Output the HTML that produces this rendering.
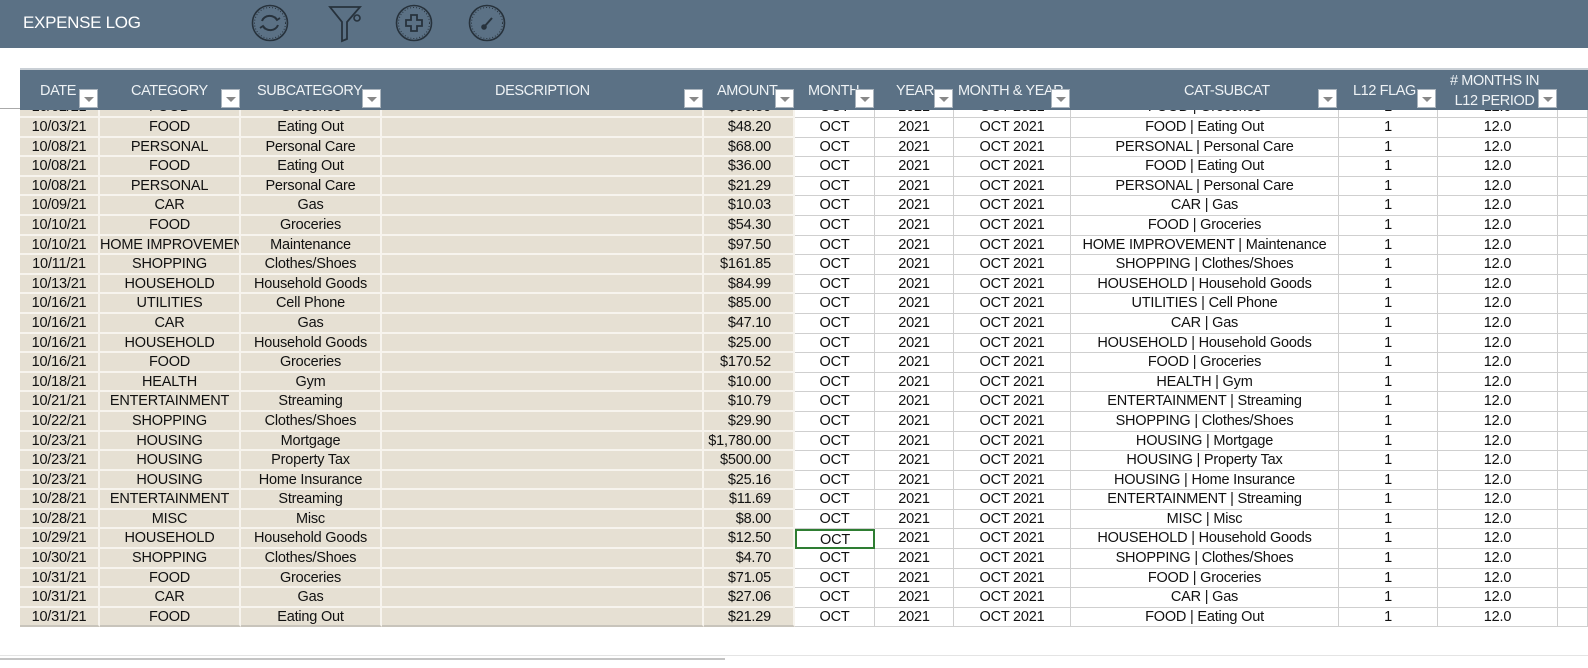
<!DOCTYPE html>
<html><head><meta charset="utf-8">
<style>
*{margin:0;padding:0;box-sizing:border-box}
html{width:1588px;height:668px;overflow:hidden}
body{width:1588px;height:668px;overflow:hidden;background:#fff;font-family:"Liberation Sans",Arial,sans-serif;position:relative}
#top{position:absolute;left:0;top:0;width:1588px;height:48px;background:#5b7185;overflow:hidden}
#title{position:absolute;left:23px;top:13px;color:#fff;font-size:17px;letter-spacing:-0.3px}
#hdr{position:absolute;left:20px;top:68px;width:1568px;height:42px;background:#5b7185;border-top:2px solid #c9cfd5;z-index:2;overflow:hidden}
.h{position:absolute;color:#eef2f5;font-size:14.5px;white-space:nowrap;text-align:center;letter-spacing:-0.4px}
.dd{position:absolute;top:19px;width:19px;height:19px;background:#fff;border:1px solid #aab4bd}
.dd:after{content:"";position:absolute;left:4px;top:7px;border-left:5px solid transparent;border-right:5px solid transparent;border-top:5px solid #888}
#body{position:absolute;left:20px;top:110px;width:1568px;height:519px;overflow:hidden}
#rows{position:absolute;left:0;top:-11.6px;width:1568px}
.r{display:flex;height:19.6px;width:1568px}
.r div{flex:none;height:19.6px;line-height:19px;font-size:14.5px;color:#111;text-align:center;white-space:nowrap;overflow:hidden;letter-spacing:-0.2px}
.b{background:#e6e0d3;border-right:2px solid #f7f4ee;border-bottom:2px solid #f7f4ee}
.w{background:#fff;border-right:1px solid #cfcfcf;border-bottom:1px solid #cfcfcf}
.c1{width:80px}.c2{width:141px}.c3{width:141px}.c4{width:322px}.c5{width:91px;text-align:right!important;padding-right:22px}.c6{width:80px}.c7{width:79px}.c8{width:117px}.c9{width:268px}.c10{width:99px}.c11{width:120px}.c12{width:30px}
</style></head><body>
<div id="top">
<div id="title">EXPENSE LOG</div>
<svg width="1588" height="48" style="position:absolute;left:0;top:0" fill="none" stroke="#27323c" stroke-width="1.6">
<circle cx="270" cy="23" r="17.5"/><circle cx="270" cy="23" r="15.5" stroke-dasharray="1 2" stroke-width="1"/>
<path d="M262 21 a8 7 0 0 1 15 -1 M278 25 a8 7 0 0 1 -15 1" stroke-width="2"/>
<path d="M275 17 l2 3 l3 -2 M265 29 l-2 -3 l-3 2" stroke-width="1.8"/>
<path d="M330 7 h30 l-13 15 v17 l-5 2 v-19 z" stroke-width="1.8"/><circle cx="357" cy="18" r="3"/>
<circle cx="414" cy="23" r="17.5"/><circle cx="414" cy="23" r="15.5" stroke-dasharray="1 2" stroke-width="1"/>
<path d="M411 15 h6 v5 h5 v6 h-5 v5 h-6 v-5 h-5 v-6 h5 z" stroke-width="1.8"/>
<circle cx="487" cy="23" r="17.5"/><circle cx="487" cy="23" r="15.5" stroke-dasharray="1 2" stroke-width="1"/>
<path d="M484 27 l8 -9" stroke-width="2"/><circle cx="484" cy="27" r="2" fill="#27323c"/>
</svg>
</div>
<div style="position:absolute;left:0;top:108px;width:20px;height:1px;background:#aaa"></div>
<div id="hdr">
<div class="h" style="left:20px;top:13px">DATE</div><div class="dd" style="left:59px"></div>
<div class="h" style="left:111px;top:13px">CATEGORY</div><div class="dd" style="left:201px"></div>
<div class="h" style="left:237px;top:13px">SUBCATEGORY</div><div class="dd" style="left:342px"></div>
<div class="h" style="left:475px;top:13px">DESCRIPTION</div><div class="dd" style="left:664px"></div>
<div class="h" style="left:697px;top:13px">AMOUNT</div><div class="dd" style="left:755px"></div>
<div class="h" style="left:788px;top:13px">MONTH</div><div class="dd" style="left:835px"></div>
<div class="h" style="left:876px;top:13px">YEAR</div><div class="dd" style="left:914px"></div>
<div class="h" style="left:938px;top:13px">MONTH &amp; YEAR</div><div class="dd" style="left:1031px"></div>
<div class="h" style="left:1164px;top:13px">CAT-SUBCAT</div><div class="dd" style="left:1298px"></div>
<div class="h" style="left:1333px;top:13px">L12 FLAG</div><div class="dd" style="left:1397px"></div>
<div class="h" style="left:1430px;top:1px;line-height:20px">&#35; MONTHS IN<br>L12 PERIOD</div><div class="dd" style="left:1518px"></div>
</div>
<div id="body"><div id="rows">
<div class="r"><div class="b c1">10/02/21</div><div class="b c2">FOOD</div><div class="b c3">Groceries</div><div class="b c4"></div><div class="b c5">$56.50</div><div class="w c6">OCT</div><div class="w c7">2021</div><div class="w c8">OCT 2021</div><div class="w c9">FOOD | Groceries</div><div class="w c10">1</div><div class="w c11">12.0</div><div class="w c12"></div></div>
<div class="r"><div class="b c1">10/03/21</div><div class="b c2">FOOD</div><div class="b c3">Eating Out</div><div class="b c4"></div><div class="b c5">$48.20</div><div class="w c6">OCT</div><div class="w c7">2021</div><div class="w c8">OCT 2021</div><div class="w c9">FOOD | Eating Out</div><div class="w c10">1</div><div class="w c11">12.0</div><div class="w c12"></div></div>
<div class="r"><div class="b c1">10/08/21</div><div class="b c2">PERSONAL</div><div class="b c3">Personal Care</div><div class="b c4"></div><div class="b c5">$68.00</div><div class="w c6">OCT</div><div class="w c7">2021</div><div class="w c8">OCT 2021</div><div class="w c9">PERSONAL | Personal Care</div><div class="w c10">1</div><div class="w c11">12.0</div><div class="w c12"></div></div>
<div class="r"><div class="b c1">10/08/21</div><div class="b c2">FOOD</div><div class="b c3">Eating Out</div><div class="b c4"></div><div class="b c5">$36.00</div><div class="w c6">OCT</div><div class="w c7">2021</div><div class="w c8">OCT 2021</div><div class="w c9">FOOD | Eating Out</div><div class="w c10">1</div><div class="w c11">12.0</div><div class="w c12"></div></div>
<div class="r"><div class="b c1">10/08/21</div><div class="b c2">PERSONAL</div><div class="b c3">Personal Care</div><div class="b c4"></div><div class="b c5">$21.29</div><div class="w c6">OCT</div><div class="w c7">2021</div><div class="w c8">OCT 2021</div><div class="w c9">PERSONAL | Personal Care</div><div class="w c10">1</div><div class="w c11">12.0</div><div class="w c12"></div></div>
<div class="r"><div class="b c1">10/09/21</div><div class="b c2">CAR</div><div class="b c3">Gas</div><div class="b c4"></div><div class="b c5">$10.03</div><div class="w c6">OCT</div><div class="w c7">2021</div><div class="w c8">OCT 2021</div><div class="w c9">CAR | Gas</div><div class="w c10">1</div><div class="w c11">12.0</div><div class="w c12"></div></div>
<div class="r"><div class="b c1">10/10/21</div><div class="b c2">FOOD</div><div class="b c3">Groceries</div><div class="b c4"></div><div class="b c5">$54.30</div><div class="w c6">OCT</div><div class="w c7">2021</div><div class="w c8">OCT 2021</div><div class="w c9">FOOD | Groceries</div><div class="w c10">1</div><div class="w c11">12.0</div><div class="w c12"></div></div>
<div class="r"><div class="b c1">10/10/21</div><div class="b c2">HOME IMPROVEMENT</div><div class="b c3">Maintenance</div><div class="b c4"></div><div class="b c5">$97.50</div><div class="w c6">OCT</div><div class="w c7">2021</div><div class="w c8">OCT 2021</div><div class="w c9">HOME IMPROVEMENT | Maintenance</div><div class="w c10">1</div><div class="w c11">12.0</div><div class="w c12"></div></div>
<div class="r"><div class="b c1">10/11/21</div><div class="b c2">SHOPPING</div><div class="b c3">Clothes/Shoes</div><div class="b c4"></div><div class="b c5">$161.85</div><div class="w c6">OCT</div><div class="w c7">2021</div><div class="w c8">OCT 2021</div><div class="w c9">SHOPPING | Clothes/Shoes</div><div class="w c10">1</div><div class="w c11">12.0</div><div class="w c12"></div></div>
<div class="r"><div class="b c1">10/13/21</div><div class="b c2">HOUSEHOLD</div><div class="b c3">Household Goods</div><div class="b c4"></div><div class="b c5">$84.99</div><div class="w c6">OCT</div><div class="w c7">2021</div><div class="w c8">OCT 2021</div><div class="w c9">HOUSEHOLD | Household Goods</div><div class="w c10">1</div><div class="w c11">12.0</div><div class="w c12"></div></div>
<div class="r"><div class="b c1">10/16/21</div><div class="b c2">UTILITIES</div><div class="b c3">Cell Phone</div><div class="b c4"></div><div class="b c5">$85.00</div><div class="w c6">OCT</div><div class="w c7">2021</div><div class="w c8">OCT 2021</div><div class="w c9">UTILITIES | Cell Phone</div><div class="w c10">1</div><div class="w c11">12.0</div><div class="w c12"></div></div>
<div class="r"><div class="b c1">10/16/21</div><div class="b c2">CAR</div><div class="b c3">Gas</div><div class="b c4"></div><div class="b c5">$47.10</div><div class="w c6">OCT</div><div class="w c7">2021</div><div class="w c8">OCT 2021</div><div class="w c9">CAR | Gas</div><div class="w c10">1</div><div class="w c11">12.0</div><div class="w c12"></div></div>
<div class="r"><div class="b c1">10/16/21</div><div class="b c2">HOUSEHOLD</div><div class="b c3">Household Goods</div><div class="b c4"></div><div class="b c5">$25.00</div><div class="w c6">OCT</div><div class="w c7">2021</div><div class="w c8">OCT 2021</div><div class="w c9">HOUSEHOLD | Household Goods</div><div class="w c10">1</div><div class="w c11">12.0</div><div class="w c12"></div></div>
<div class="r"><div class="b c1">10/16/21</div><div class="b c2">FOOD</div><div class="b c3">Groceries</div><div class="b c4"></div><div class="b c5">$170.52</div><div class="w c6">OCT</div><div class="w c7">2021</div><div class="w c8">OCT 2021</div><div class="w c9">FOOD | Groceries</div><div class="w c10">1</div><div class="w c11">12.0</div><div class="w c12"></div></div>
<div class="r"><div class="b c1">10/18/21</div><div class="b c2">HEALTH</div><div class="b c3">Gym</div><div class="b c4"></div><div class="b c5">$10.00</div><div class="w c6">OCT</div><div class="w c7">2021</div><div class="w c8">OCT 2021</div><div class="w c9">HEALTH | Gym</div><div class="w c10">1</div><div class="w c11">12.0</div><div class="w c12"></div></div>
<div class="r"><div class="b c1">10/21/21</div><div class="b c2">ENTERTAINMENT</div><div class="b c3">Streaming</div><div class="b c4"></div><div class="b c5">$10.79</div><div class="w c6">OCT</div><div class="w c7">2021</div><div class="w c8">OCT 2021</div><div class="w c9">ENTERTAINMENT | Streaming</div><div class="w c10">1</div><div class="w c11">12.0</div><div class="w c12"></div></div>
<div class="r"><div class="b c1">10/22/21</div><div class="b c2">SHOPPING</div><div class="b c3">Clothes/Shoes</div><div class="b c4"></div><div class="b c5">$29.90</div><div class="w c6">OCT</div><div class="w c7">2021</div><div class="w c8">OCT 2021</div><div class="w c9">SHOPPING | Clothes/Shoes</div><div class="w c10">1</div><div class="w c11">12.0</div><div class="w c12"></div></div>
<div class="r"><div class="b c1">10/23/21</div><div class="b c2">HOUSING</div><div class="b c3">Mortgage</div><div class="b c4"></div><div class="b c5">$1,780.00</div><div class="w c6">OCT</div><div class="w c7">2021</div><div class="w c8">OCT 2021</div><div class="w c9">HOUSING | Mortgage</div><div class="w c10">1</div><div class="w c11">12.0</div><div class="w c12"></div></div>
<div class="r"><div class="b c1">10/23/21</div><div class="b c2">HOUSING</div><div class="b c3">Property Tax</div><div class="b c4"></div><div class="b c5">$500.00</div><div class="w c6">OCT</div><div class="w c7">2021</div><div class="w c8">OCT 2021</div><div class="w c9">HOUSING | Property Tax</div><div class="w c10">1</div><div class="w c11">12.0</div><div class="w c12"></div></div>
<div class="r"><div class="b c1">10/23/21</div><div class="b c2">HOUSING</div><div class="b c3">Home Insurance</div><div class="b c4"></div><div class="b c5">$25.16</div><div class="w c6">OCT</div><div class="w c7">2021</div><div class="w c8">OCT 2021</div><div class="w c9">HOUSING | Home Insurance</div><div class="w c10">1</div><div class="w c11">12.0</div><div class="w c12"></div></div>
<div class="r"><div class="b c1">10/28/21</div><div class="b c2">ENTERTAINMENT</div><div class="b c3">Streaming</div><div class="b c4"></div><div class="b c5">$11.69</div><div class="w c6">OCT</div><div class="w c7">2021</div><div class="w c8">OCT 2021</div><div class="w c9">ENTERTAINMENT | Streaming</div><div class="w c10">1</div><div class="w c11">12.0</div><div class="w c12"></div></div>
<div class="r"><div class="b c1">10/28/21</div><div class="b c2">MISC</div><div class="b c3">Misc</div><div class="b c4"></div><div class="b c5">$8.00</div><div class="w c6">OCT</div><div class="w c7">2021</div><div class="w c8">OCT 2021</div><div class="w c9">MISC | Misc</div><div class="w c10">1</div><div class="w c11">12.0</div><div class="w c12"></div></div>
<div class="r"><div class="b c1">10/29/21</div><div class="b c2">HOUSEHOLD</div><div class="b c3">Household Goods</div><div class="b c4"></div><div class="b c5">$12.50</div><div class="w c6" style="border:2px solid #2e7d32">OCT</div><div class="w c7">2021</div><div class="w c8">OCT 2021</div><div class="w c9">HOUSEHOLD | Household Goods</div><div class="w c10">1</div><div class="w c11">12.0</div><div class="w c12"></div></div>
<div class="r"><div class="b c1">10/30/21</div><div class="b c2">SHOPPING</div><div class="b c3">Clothes/Shoes</div><div class="b c4"></div><div class="b c5">$4.70</div><div class="w c6">OCT</div><div class="w c7">2021</div><div class="w c8">OCT 2021</div><div class="w c9">SHOPPING | Clothes/Shoes</div><div class="w c10">1</div><div class="w c11">12.0</div><div class="w c12"></div></div>
<div class="r"><div class="b c1">10/31/21</div><div class="b c2">FOOD</div><div class="b c3">Groceries</div><div class="b c4"></div><div class="b c5">$71.05</div><div class="w c6">OCT</div><div class="w c7">2021</div><div class="w c8">OCT 2021</div><div class="w c9">FOOD | Groceries</div><div class="w c10">1</div><div class="w c11">12.0</div><div class="w c12"></div></div>
<div class="r"><div class="b c1">10/31/21</div><div class="b c2">CAR</div><div class="b c3">Gas</div><div class="b c4"></div><div class="b c5">$27.06</div><div class="w c6">OCT</div><div class="w c7">2021</div><div class="w c8">OCT 2021</div><div class="w c9">CAR | Gas</div><div class="w c10">1</div><div class="w c11">12.0</div><div class="w c12"></div></div>
<div class="r"><div class="b c1" style="border-bottom-color:#c8c4bb">10/31/21</div><div class="b c2" style="border-bottom-color:#c8c4bb">FOOD</div><div class="b c3" style="border-bottom-color:#c8c4bb">Eating Out</div><div class="b c4" style="border-bottom-color:#c8c4bb"></div><div class="b c5" style="border-bottom-color:#c8c4bb">$21.29</div><div class="w c6">OCT</div><div class="w c7">2021</div><div class="w c8">OCT 2021</div><div class="w c9">FOOD | Eating Out</div><div class="w c10">1</div><div class="w c11">12.0</div><div class="w c12"></div></div>
</div></div>
<div style="position:absolute;left:0;top:655px;width:1588px;height:1px;background:#e4e4e4"></div>
<div style="position:absolute;left:0;top:658px;width:725px;height:2px;background:#c4c4c4"></div>
</body></html>
